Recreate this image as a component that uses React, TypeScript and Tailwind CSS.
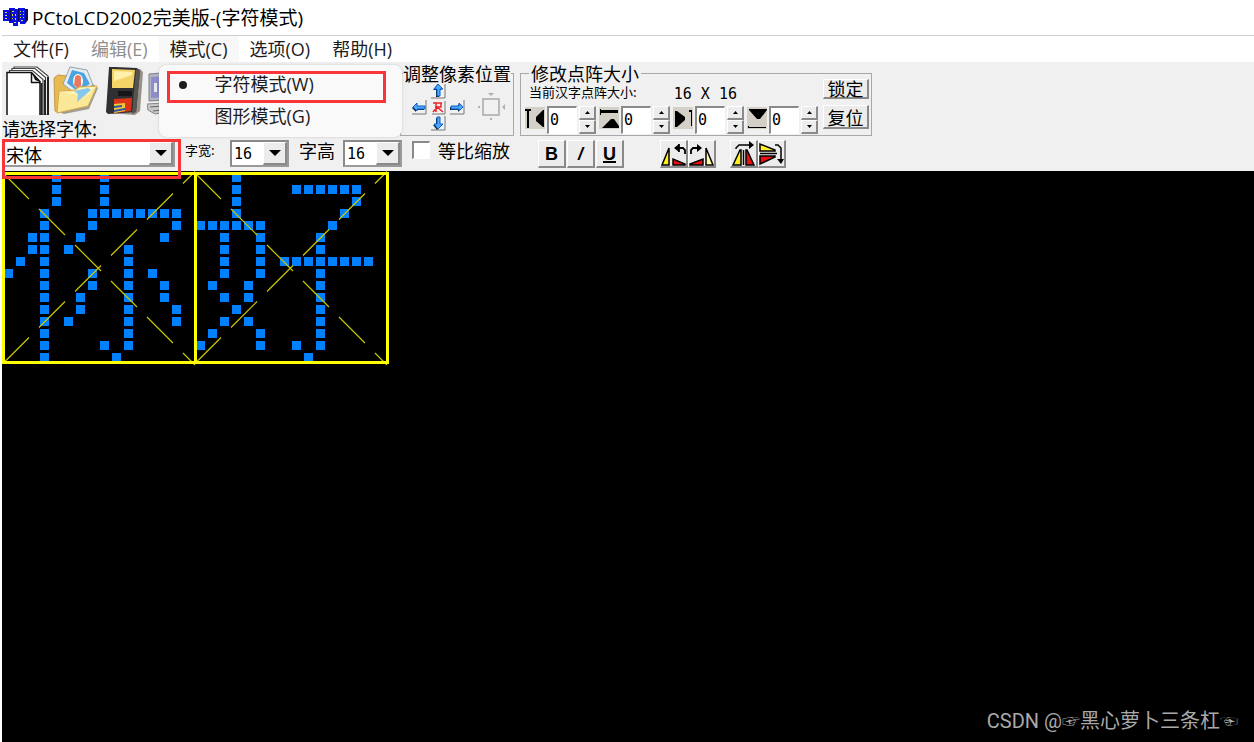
import { useState } from 'react';
import type { ReactNode } from 'react';

const YOU = [
  '....#...#.......',
  '....#...#.......',
  '....#...#.......',
  '...#...########.',
  '...#...#......#.',
  '..##..#......#..',
  '..##.#....#.....',
  '.#.#......#.....',
  '#..#...#..#.#...',
  '...#...#..#..#..',
  '...#..#...#..#..',
  '...#..#...#...#.',
  '...#.#....#...#.',
  '...#......#.....',
  '...#....#.#.....',
  '...#.....#......'
];

const GOOD = [
  '...#............',
  '...#....######..',
  '...#.........#..',
  '...#........#...',
  '######.....#....',
  '..#..#....#.....',
  '..#..#....#.....',
  '..#..#.########.',
  '..#..#....#.....',
  '.#..#.....#.....',
  '..#.#.....#.....',
  '...#......#.....',
  '..#.#.....#.....',
  '.#...#....#.....',
  '#....#..#.#.....',
  '.........#......'
];

const raised =
  'border-t border-l border-r-2 border-b-2 border-t-white border-l-white border-r-[#8a8a8a] border-b-[#8a8a8a] bg-[#ececec]';
const sunken =
  'border-t-2 border-l-2 border-r border-b border-t-[#8a8a8a] border-l-[#8a8a8a] border-r-white border-b-white bg-white';

interface DropDownProps {
  id: string;
  className: string;
  options: string[];
}

function DropDown({ id, className, options }: DropDownProps) {
  return (
    <div className={`relative h-[27px] border-2 border-[#8a8a8a] border-r-[#9a9a9a] border-b-[#9a9a9a] bg-white ${className}`}>
      <select id={id} className="block h-full w-full appearance-none bg-white pl-0.5 leading-[22px] outline-none">
        {options.map((o) => (
          <option key={o}>{o}</option>
        ))}
      </select>
      <span className={`pointer-events-none absolute top-0 right-0 flex h-full w-6 items-center justify-center ${raised}`}>
        <svg className="h-1.5 w-3" viewBox="0 0 12 6">
          <path d="M0 0h12L6 6z" />
        </svg>
      </span>
    </div>
  );
}

interface SpinnerProps {
  label: string;
  icon: ReactNode;
}

function Spinner({ label, icon }: SpinnerProps) {
  const [value, setValue] = useState(0);

  return (
    <div className="flex w-[71px] items-start gap-0.5">
      <svg className="mt-px h-[22px] w-5 shrink-0 bg-[#d4d0c8]" viewBox="0 0 20 22">
        {icon}
      </svg>
      <input
        type="text"
        aria-label={label}
        value={value}
        onChange={(e) => setValue(Number(e.target.value) || 0)}
        className={`h-[28px] w-[30px] shrink-0 pb-0.5 pl-px font-['DejaVu_Sans_Mono',monospace] text-[15px] outline-none ${sunken}`}
      />
      <div className="flex w-[17px] shrink-0 flex-col">
        <button
          aria-label={`${label} +`}
          onClick={() => setValue(value + 1)}
          className={`flex h-3.5 w-full items-center justify-center ${raised}`}
        >
          <svg className="h-[3px] w-[5px]" viewBox="0 0 5 3">
            <path d="M0 3h5L2.500 0z" />
          </svg>
        </button>
        <button
          aria-label={`${label} -`}
          onClick={() => setValue(value - 1)}
          className={`flex h-3.5 w-full items-center justify-center ${raised}`}
        >
          <svg className="h-[3px] w-[5px]" viewBox="0 0 5 3">
            <path d="M0 0h5L2.500 3z" />
          </svg>
        </button>
      </div>
    </div>
  );
}

function AppIcon() {
  return (
    <svg className="h-[21px] w-[25px]" viewBox="0 0 25 21">
      <path d="M0 3h6V1h6v1h3V1h7v1h3v11h-3v4h-5v-2h-2v4h-5v-3H6v-2H0z" fill="#0a10e0" />
      <path d="M22 2h3v11l-3 4zM7 3h1v11H7zM15 2h1v12h-1z" fill="#0a0a50" />
      <path
        d="M2 5h2v1H2zM2 8h2v1H2zM2 11h2v1H2zM9 4h2v1H9zM9 7h1v2H9zM12 7h1v2h-1zM9 11h1v1H9zM12 11h1v2h-1zM11 15h2v1h-2zM17 4h1v1h-1zM20 4h1v1h-1zM17 7h1v1h-1zM20 7h1v1h-1zM17 10h1v1h-1zM20 10h1v1h-1zM18 13h2v1h-2z"
        fill="#e6dc50"
      />
    </svg>
  );
}

function NewIcon() {
  return (
    <svg className="h-[49px] w-[44px]" viewBox="0 0 44 49">
      <g fill="#fff" stroke="#444" strokeWidth="1.200">
        <path d="M8 1h23l11 9v39H8z" />
        <path d="M6 2.500h23l10.500 9V49H6z" />
        <path d="M3.500 4.500h23l10.500 9V49h-33z" />
      </g>
      <path d="M1 6.500h24.500l8.500 9V49H1z" fill="#fff" />
      <path d="M1 49V6.500h24.500l8.500 9V49M25.500 7v9.500H34" fill="none" stroke="#111" strokeWidth="1.500" />
      <path d="M26 7l8 9-5-2z" fill="#111" />
      <path d="M35.500 17v32M39 14v35M42 11v38" stroke="#222" strokeWidth="2" />
    </svg>
  );
}

function OpenIcon() {
  return (
    <svg className="h-[49px] w-[46px]" viewBox="0 0 46 49">
      <path d="M40 18l5 4-9 21-25 5-8-3z" fill="#a29c90" />
      <path d="M1 12l4-3 9 1 3 5 15-4 1 10-27 26-4-2z" fill="#e8bb50" stroke="#c6984c" />
      <path d="M17 1l17 3 6 15-17 9-13-10z" fill="#e6edf0" stroke="#91a1ab" />
      <path d="M19 4l12 3 6 11-13 7-10-8z" fill="#4ba3df" />
      <ellipse cx="25" cy="15" rx="5" ry="7" fill="#fff" />
      <path d="M22 11q3-4 6 0v9l-3 3-4-4z" fill="#e8785f" />
      <path d="M6 25l16-1 4-3 18-1-9 20-31 7z" fill="#fae898" stroke="#d4aa50" />
      <path d="M8 27l15-1 4-4 14-1-6 8z" fill="#fff5bd" />
      <path d="M21 25l14-3 3 2-14 12 1-8z" fill="#86c8ed" />
    </svg>
  );
}

function SaveIcon() {
  return (
    <svg className="h-[49px] w-[38px]" viewBox="0 0 38 49">
      <path d="M5 2l29 1 3 3-3 39-5 4-27-2z" fill="#97918a" />
      <path d="M3 1h6l22 1 3 3-4 41-28 2-2-2z" fill="#303033" />
      <path d="M30 3l4 2-4 41-4 2z" fill="#57544f" />
      <path d="M6 3l23 1-2 18H6z" fill="#f5d467" />
      <path d="M8 5l18 1v3L8 15z" fill="#fff0ac" />
      <path d="M12 25h14v5H12z" fill="#15161a" />
      <path d="M8 33l18-1-1 13-17 2z" fill="#dc3416" />
      <path d="M8 38l11-1v8l-11 2z" fill="#f5c837" />
      <path d="M8 40l8-1v2l-8 1zM8 44l11-2v2L8 46z" fill="#3154a5" />
    </svg>
  );
}

function ComputerIcon() {
  return (
    <svg className="h-[49px] w-[40px]" viewBox="0 0 40 49">
      <path d="M2 8l34-3v28L2 35z" fill="#b4b6bf" stroke="#7d8088" />
      <path d="M4 11l29-2v21L4 32z" fill="#8c8dca" />
      <path d="M7 17h3v9H7z" fill="#e8e8f0" />
      <path d="M0 38l32-2 6 6-30 6-7-4z" fill="#c9c9c9" stroke="#858585" />
      <path d="M3 41l25-2M6 45l27-3" stroke="#666" />
    </svg>
  );
}

function MoveArrow({ d }: { d: string }) {
  return (
    <svg className="h-4 w-4" viewBox="0 0 16 16">
      <path d="M15 1v14H1" fill="none" stroke="#777" />
      <path d={d} fill="#123" transform="translate(-1 1)" />
      <path d={d} fill="#4ea8ff" stroke="#0c5fc8" />
    </svg>
  );
}

function PixelShift() {
  return (
    <div className="grid w-[58px] grid-cols-3 place-items-center">
      <span />
      <button aria-label="上移">
        <MoveArrow d="M8 1l5 5h-3v7H7V6H4z" />
      </button>
      <span />
      <button aria-label="左移">
        <MoveArrow d="M2 8l4-4v3h8v3H6v2z" />
      </button>
      <button aria-label="还原">
        <svg className="h-4 w-4" viewBox="0 0 16 16">
          <path d="M15 2v13H2" fill="none" stroke="#777" />
          <path d="M3 4h9M5 8h6V4M6 4v9M3 13l4-5 6 5" fill="none" stroke="#f0202c" strokeWidth="1.500" />
        </svg>
      </button>
      <button aria-label="右移">
        <MoveArrow d="M14 8l-4-4v3H2v3h8v2z" />
      </button>
      <span />
      <button aria-label="下移">
        <MoveArrow d="M8 14l5-5h-3V2H7v7H4z" />
      </button>
      <span />
    </div>
  );
}

const spinners = [
  {
    label: '左边距',
    icon: <path d="M0 2h6v2H4v17H2V4H0zM19 3v17h-1l-7-6v-4l7-7z" />
  },
  {
    label: '上边距',
    icon: <path d="M1 2h1v1h17v3H2v2H1zM3 21l9-9h3l5 7v2z" />
  },
  {
    label: '右边距',
    icon: <path d="M2 4h2l8 6v3l-8 7H2zM16 3h3v16h-1V5h-2z" />
  },
  {
    label: '下边距',
    icon: <path d="M2 2h18v1l-7 9h-3L2 3zM1 19h1v1h17v1H1z" />
  }
];

const transforms = [
  {
    label: '向左旋转',
    icon: (
      <>
        <path d="M1 24L8 7v17z" fill="#ffef20" stroke="#000" strokeWidth="1.500" />
        <path d="M12 24v-6l12 5v1z" fill="#e81010" stroke="#000" strokeWidth="1.500" />
        <path d="M24 13V9l-2-2h-8M18 3v8" fill="none" stroke="#000" strokeWidth="1.800" />
        <path d="M13 7l5-4v8z" />
      </>
    )
  },
  {
    label: '向右旋转',
    icon: (
      <>
        <path d="M17 24V7l7 17z" fill="#fff8a0" stroke="#000" strokeWidth="1.500" />
        <path d="M14 24v-6L1 23v1z" fill="#e81010" stroke="#000" strokeWidth="1.500" />
        <path d="M2 13V9l2-2h8" fill="none" stroke="#000" strokeWidth="1.800" />
        <path d="M13 7L8 3v8z" />
      </>
    )
  },
  {
    label: '水平翻转',
    icon: (
      <>
        <path d="M2 24L9 9h1v15z" fill="#ffef20" stroke="#000" strokeWidth="1.500" />
        <path d="M15 9h1l7 15h-8z" fill="#e81010" stroke="#000" strokeWidth="1.500" />
        <path d="M5 8V7l3-3h12M12.500 9v15" fill="none" stroke="#000" strokeWidth="1.500" />
        <path d="M23 4l-5-4v8z" />
      </>
    )
  },
  {
    label: '垂直翻转',
    icon: (
      <>
        <path d="M1 3v7h15V9z" fill="#ffef20" stroke="#000" strokeWidth="1.500" />
        <path d="M1 23v-8h15v1z" fill="#e81010" stroke="#000" strokeWidth="1.500" />
        <path d="M1 12.500h17M16 4h3l3 3v13" fill="none" stroke="#000" strokeWidth="1.500" />
        <path d="M22 23l-4-5h7z" />
      </>
    )
  }
];

function TransformButton({ label, icon }: SpinnerProps) {
  return (
    <button aria-label={label} className={`h-7 w-7 ${raised}`}>
      <svg className="h-[25px] w-[25px]" viewBox="0 0 25 25">
        {icon}
      </svg>
    </button>
  );
}

function DotGlyph({ rows, x }: { rows: string[]; x: number }) {
  return (
    <g transform={`translate(${x} 0)`}>
      {rows.map((row, r) =>
        row
          .split('')
          .map((c, i) => c === '#' && <rect key={`${r}-${i}`} x={2 + i * 12} y={1 + r * 12} width="9" height="9" fill="#0080ff" />)
      )}
      <path
        d="M1 1L193 193M1 191.500L193 -0.500"
        fill="none"
        stroke="#c8c800"
        strokeWidth="1.200"
        strokeDasharray="36.8 14.1"
      />
      <rect x="1.500" y="1.500" width="192" height="189" fill="none" stroke="#ff0" strokeWidth="3" />
    </g>
  );
}

export default function App() {
  const [mode, setMode] = useState(0);
  const item = 'px-[11px] leading-[26px]';

  return (
    <div className="flex min-h-screen flex-col bg-white pl-0.5 font-['Open_Sans','Noto_Sans_CJK_SC',sans-serif] text-[18px] text-black">
      <header className="flex h-9 items-center gap-1 border-b border-[#cfcfd4] pl-px">
        <AppIcon />
        <h1 className="text-[19px] leading-[26px]">PCtoLCD2002完美版-(字符模式)</h1>
      </header>

      <nav className="flex h-[26px] items-center text-[#1c1c1c]">
        <button className={item}>文件(F)</button>
        <button className={`${item} text-[#8f8f8f]`} disabled>
          编辑(E)
        </button>
        <div className="relative">
          <button className={`${item} bg-[#f8f8f8]`}>模式(C)</button>
          <div
            role="menu"
            className="absolute top-full left-0 z-10 mt-0.5 w-[243px] rounded-lg bg-[#f9f9f9] py-1 shadow-[0_0_3px_rgba(0,0,0,0.15)]"
          >
            {['字符模式(W)', '图形模式(G)'].map((name, i) => (
              <button
                key={name}
                role="menuitemradio"
                aria-checked={mode === i}
                onClick={() => setMode(i)}
                className="flex h-8 w-full items-center pl-5"
              >
                <span className="w-9 text-left">
                  {mode === i && <span className="block h-2 w-2 rounded-full bg-[#1c1c1c]" />}
                </span>
                {name}
              </button>
            ))}
            <span className="pointer-events-none absolute top-1.5 right-4 left-2 h-8 border-3 border-[#fa3538]" />
          </div>
        </div>
        <button className={item}>选项(O)</button>
        <button className={item}>帮助(H)</button>
      </nav>

      <section className="flex flex-col bg-[#f0f0f0] pb-[3px] font-['Noto_Sans_CJK_SC',sans-serif] text-[18px]">
        <div className="flex h-[77px] items-start">
          <div className="w-[398px] shrink-0 pt-1">
            <div className="flex gap-[3px] pl-1">
              <button aria-label="新建">
                <NewIcon />
              </button>
              <button aria-label="打开">
                <OpenIcon />
              </button>
              <button aria-label="保存" className="ml-1">
                <SaveIcon />
              </button>
              <button aria-label="设备">
                <ComputerIcon />
              </button>
            </div>
            <label htmlFor="font" className="block leading-[26px]">
              请选择字体:
            </label>
          </div>

          <fieldset className="mt-px h-[73px] w-[114px] shrink-0 border border-[#a8a8a8] pl-2">
            <legend className="-ml-1.5 leading-5 whitespace-nowrap">调整像素位置</legend>
            <div className="flex items-center gap-2.5">
              <PixelShift />
              <svg className="h-7 w-7" viewBox="0 0 28 28">
                <path d="M6 6h16v16H6z" fill="none" stroke="#a8a8a8" strokeWidth="1.500" />
                <path d="M11 0h6l-3 3zM28 11v6l-3-3zM13 25h2v2h-2zM1 13h2v2H1z" fill="#b0b0b0" />
              </svg>
            </div>
          </fieldset>

          <fieldset className="mt-px ml-1.5 flex h-[73px] w-[352px] shrink-0 border border-[#a8a8a8] pl-1">
            <legend className="ml-1 px-0.5 leading-5 whitespace-nowrap">修改点阵大小</legend>
            <div className="flex">
              <div className="w-[298px]">
                <div className="flex h-[23px] items-start justify-between pr-[86px] pl-1">
                  <span className="text-[13px] leading-[18px]">当前汉字点阵大小:</span>
                  <span className="font-['DejaVu_Sans_Mono',monospace] text-[15px] leading-[22px]">16 X 16</span>
                </div>
                <div className="flex gap-[3px]">
                  {spinners.map((s) => (
                    <Spinner key={s.label} {...s} />
                  ))}
                </div>
              </div>
              <div className="-mt-1 flex w-[46px] flex-col gap-1.5">
                <button className={`h-5 leading-[17px] ${raised}`}>锁定</button>
                <button className={`h-6 leading-5 ${raised}`}>复位</button>
              </div>
            </div>
          </fieldset>
        </div>

        <div className="flex h-[29px] items-center">
          <DropDown id="font" className="w-[173px]" options={['宋体', '黑体', '楷体']} />
          <label htmlFor="width" className="ml-2.5 w-[45px] self-start text-[13px] leading-[22px]">
            字宽:
          </label>
          <DropDown
            id="width"
            className="w-[59px] font-['DejaVu_Sans_Mono',monospace] text-[15px]"
            options={['16', '24', '32']}
          />
          <label htmlFor="height" className="ml-2.5 w-11 self-start leading-[22px]">
            字高
          </label>
          <DropDown
            id="height"
            className="w-[59px] font-['DejaVu_Sans_Mono',monospace] text-[15px]"
            options={['16', '24', '32']}
          />
          <label className="ml-2.5 flex items-center gap-2 self-start leading-[22px]">
            <input type="checkbox" className={`h-[18px] w-[18px] appearance-none ${sunken}`} />
            等比缩放
          </label>
          <div className="ml-7 flex gap-px font-['Liberation_Sans',sans-serif] font-bold">
            <button className={`h-7 w-7 ${raised}`}>B</button>
            <button className={`h-7 w-7 italic ${raised}`}>/</button>
            <button className={`h-7 w-7 underline decoration-2 ${raised}`}>U</button>
          </div>
          <div className="ml-9 flex">
            {transforms.slice(0, 2).map((t) => (
              <TransformButton key={t.label} {...t} />
            ))}
          </div>
          <div className="ml-3.5 flex">
            {transforms.slice(2).map((t) => (
              <TransformButton key={t.label} {...t} />
            ))}
          </div>
        </div>
      </section>

      <main className="relative flex-1 bg-black">
        {/* marks the font selector above */}
        <span className="pointer-events-none absolute bottom-full left-0 z-10 -mb-2 h-10 w-[179px] border-3 border-[#fa3538]" />
        <svg className="block h-[196px] w-[388px]" viewBox="0 -1 388 196">
          <DotGlyph rows={YOU} x={0} />
          <DotGlyph rows={GOOD} x={192} />
        </svg>
        <p className="absolute right-4 bottom-1 font-['Roboto','Noto_Sans_CJK_SC',sans-serif] text-[20px] leading-8 text-[#a9a9a9]">
          CSDN @<span className="text-[18px]">☞</span>黑心萝卜三条杠<span className="text-[18px]">☜</span>
        </p>
      </main>
    </div>
  );
}
